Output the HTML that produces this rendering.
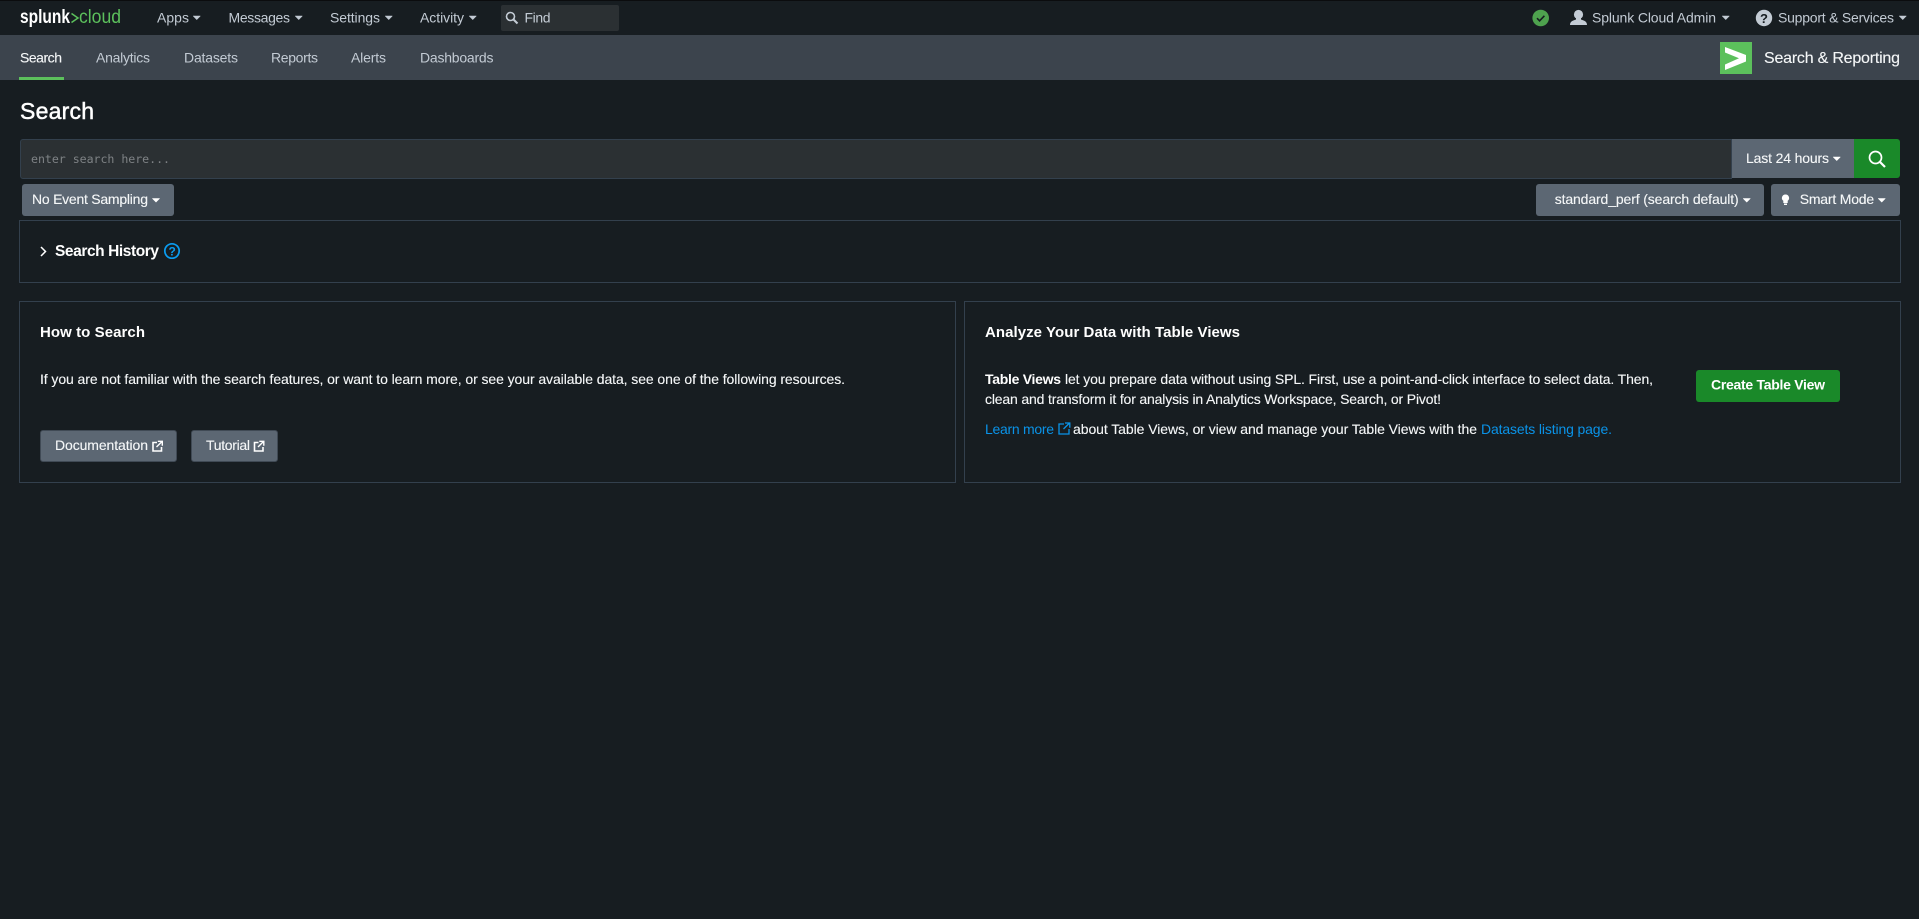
<!DOCTYPE html>
<html lang="en">
<head>
<meta charset="utf-8">
<title>Search | Splunk</title>
<style>
html,body{margin:0;padding:0;width:1919px;height:919px;overflow:hidden;background:#171d21;}
.b{position:absolute;box-sizing:border-box;}
svg{position:absolute;left:0;top:0;}
text{font-family:"Liberation Sans",sans-serif;font-size:14px;fill:#c3cbd4;}
.w{fill:#f5f7f8;stroke:#f5f7f8;stroke-width:.12;}
.h{font-weight:700;fill:#fff;}
.t{fill:#c3cbd4;stroke:#c3cbd4;stroke-width:.6;stroke-linejoin:round;}
.f{fill:#fff;stroke:#fff;stroke-width:.6;stroke-linejoin:round;}
</style>
</head>
<body>
<div class="b" style="left:0;top:0;width:1919px;height:1px;background:#0b0c0e"></div>
<div class="b" style="left:0;top:35px;width:1919px;height:45px;background:#3c444d"></div>
<div class="b" style="left:19px;top:77px;width:45px;height:3px;background:#5cc05c"></div>
<div class="b" style="left:501px;top:5px;width:118px;height:26px;background:#2b3033;border-radius:2px"></div>

<div class="b" style="left:20px;top:139px;width:1712px;height:40px;background:#2b3033;border:1px solid #33404d;border-radius:3px 0 0 3px"></div>
<div class="b" style="left:1732px;top:139px;width:122px;height:39px;background:#5c6773"></div>
<div class="b" style="left:1854px;top:139px;width:46px;height:39px;background:#1a8929;border-radius:0 3px 3px 0"></div>

<div class="b" style="left:22px;top:184px;width:152px;height:32px;background:#5c6773;border-radius:3px"></div>
<div class="b" style="left:1536px;top:184px;width:228px;height:32px;background:#5c6773;border-radius:3px"></div>
<div class="b" style="left:1771px;top:184px;width:129px;height:32px;background:#5c6773;border-radius:3px"></div>

<div class="b" style="left:19px;top:220px;width:1882px;height:63px;border:1px solid #33404d"></div>
<div class="b" style="left:19px;top:301px;width:937px;height:182px;border:1px solid #33404d"></div>
<div class="b" style="left:964px;top:301px;width:937px;height:182px;border:1px solid #33404d"></div>

<div class="b" style="left:40px;top:430px;width:137px;height:32px;background:#5c6773;border:1px solid #404a55;border-radius:3px"></div>
<div class="b" style="left:191px;top:430px;width:87px;height:32px;background:#5c6773;border:1px solid #404a55;border-radius:3px"></div>
<div class="b" style="left:1696px;top:370px;width:144px;height:32px;background:#1a8929;border-radius:3px"></div>

<svg width="1919" height="919" viewBox="0 0 1919 919" xmlns="http://www.w3.org/2000/svg">
  <!-- logo -->
  <text x="20" y="23" class="h" style="font-size:19.5px" textLength="50" lengthAdjust="spacingAndGlyphs">splunk</text>
  <path d="M71.500 13.500l6.500 4.500-6.500 4.500" fill="none" stroke="#5cc05c" stroke-width="1.500"/>
  <text x="79" y="23" style="font-size:19.5px;fill:#5cc05c" textLength="42" lengthAdjust="spacingAndGlyphs">cloud</text>

  <!-- top nav -->
  <text x="157" y="22.500" textLength="32">Apps</text>
  <polygon class="t" points="193.300,16 200.200,16 196.750,19.500"/>
  <text x="228.500" y="22.500" textLength="61.500">Messages</text>
  <polygon class="t" points="295.300,16 302.200,16 298.750,19.500"/>
  <text x="330" y="22.500" textLength="50">Settings</text>
  <polygon class="t" points="385.300,16 392.200,16 388.750,19.500"/>
  <text x="420" y="22.500" textLength="44">Activity</text>
  <polygon class="t" points="469.300,16 476.200,16 472.750,19.500"/>
  <circle cx="510.500" cy="16.500" r="4" fill="none" stroke="#c3cbd4" stroke-width="1.600"/>
  <path d="M513.500 19.500L517.500 23.500" stroke="#c3cbd4" stroke-width="2" fill="none"/>
  <text x="524.500" y="22.500" textLength="26">Find</text>

  <!-- top right -->
  <circle cx="1540.700" cy="18" r="8.300" fill="#4ea24e"/>
  <path d="M1537 18.200l2.600 2.600 4.800-5" fill="none" stroke="#171d21" stroke-width="1.600"/>
  <circle cx="1578.500" cy="14.500" r="4.600" fill="#c3cbd4"/>
  <path d="M1570 25c0-4 3.500-4.500 6-5.500v-2h5v2c2.500 1 6 1.500 6 5.500z" fill="#c3cbd4"/>
  <text x="1592" y="22.500" textLength="124">Splunk Cloud Admin</text>
  <polygon class="t" points="1722.300,16 1729.200,16 1725.750,19.500"/>
  <circle cx="1764" cy="18" r="8.200" fill="#c3cbd4"/>
  <text x="1760" y="23" style="font-size:13px;font-weight:700;fill:#171d21">?</text>
  <text x="1778" y="22.500" textLength="116">Support &amp; Services</text>
  <polygon class="t" points="1899.300,16 1906.200,16 1902.750,19.500"/>

  <!-- sub nav -->
  <text x="20" y="62.500" class="w" textLength="42">Search</text>
  <text x="96" y="62.500" textLength="54">Analytics</text>
  <text x="184" y="62.500" textLength="54">Datasets</text>
  <text x="271" y="62.500" textLength="47">Reports</text>
  <text x="351" y="62.500" textLength="35">Alerts</text>
  <text x="420" y="62.500" textLength="73.500">Dashboards</text>

  <rect x="1720" y="42" width="32" height="32" fill="#5cc05c"/>
  <polygon points="1725,47 1746,55 1746,61.500 1725,70 1725,64.500 1739,58.300 1725,52.500" fill="#fff"/>
  <text x="1764" y="63" class="w" style="font-size:16px" textLength="136">Search &amp; Reporting</text>

  <!-- title -->
  <text x="20" y="119" class="h" style="font-size:23px;font-weight:400;stroke:#fff;stroke-width:.5" textLength="74">Search</text>

  <!-- search bar -->
  <text x="31" y="163" style="font-family:'DejaVu Sans Mono','Liberation Mono',monospace;font-size:11.600px;fill:#7e8285" textLength="139">enter search here...</text>
  <text x="1746" y="163" class="w" textLength="83">Last 24 hours</text>
  <polygon class="f" points="1833.300,157 1840.200,157 1836.750,160.500"/>
  <circle cx="1875.500" cy="157.500" r="6" fill="none" stroke="#fff" stroke-width="1.700"/>
  <path d="M1880 162l5 5" stroke="#fff" stroke-width="2.200" fill="none"/>

  <text x="32" y="204" class="w" textLength="116">No Event Sampling</text>
  <polygon class="f" points="152.500,198.500 159.500,198.500 156,202"/>
  <text x="1554.700" y="204" class="w" textLength="184">standard_perf (search default)</text>
  <polygon class="f" points="1743.300,198.500 1750.200,198.500 1746.750,202"/>
  <path d="M1785.500 194.500a3.500 3.500 0 0 1 2.200 6.300v2.200h-4.400v-2.200a3.500 3.500 0 0 1 2.200-6.300z" fill="#fff"/>
  <rect x="1784" y="203.500" width="3" height="1.500" fill="#fff"/>
  <text x="1799.700" y="204" class="w" textLength="74.500">Smart Mode</text>
  <polygon class="f" points="1878.300,198.500 1885.200,198.500 1881.750,202"/>

  <!-- search history -->
  <path d="M41 247l4.500 4.500-4.500 4.500" fill="none" stroke="#fff" stroke-width="1.500"/>
  <text x="55" y="256" class="h" style="font-size:15.500px" textLength="104">Search History</text>
  <circle cx="172" cy="251" r="7.200" fill="none" stroke="#0a9cf0" stroke-width="1.700"/>
  <text x="168.500" y="255.500" style="font-size:12px;fill:#0a9cf0;font-weight:700">?</text>

  <!-- how to -->
  <text x="40" y="337" class="h" style="font-size:15px" textLength="105">How to Search</text>
  <text x="40" y="384" class="w" textLength="805">If you are not familiar with the search features, or want to learn more, or see your available data, see one of the following resources.</text>
  <text x="55" y="450" class="w" textLength="93">Documentation</text>
  <path d="M157 442.500h-4v8.500h8.500v-4" fill="none" stroke="#fff" stroke-width="1.600"/>
  <path d="M156.500 447l5-5M157.800 441.300h4.500v4.500" fill="none" stroke="#fff" stroke-width="1.400"/>
  <text x="206" y="450" class="w" textLength="44">Tutorial</text>
  <path d="M258.500 442.500h-4v8.500h8.500v-4" fill="none" stroke="#fff" stroke-width="1.600"/>
  <path d="M258 447l5-5M259.300 441.300h4.500v4.500" fill="none" stroke="#fff" stroke-width="1.400"/>

  <!-- table views -->
  <text x="985" y="337" class="h" style="font-size:15px" textLength="255">Analyze Your Data with Table Views</text>
  <text x="985" y="384" class="h" textLength="76">Table Views</text>
  <text x="1065" y="384" class="w" textLength="588">let you prepare data without using SPL. First, use a point-and-click interface to select data. Then,</text>
  <text x="985" y="404" class="w" textLength="456">clean and transform it for analysis in Analytics Workspace, Search, or Pivot!</text>
  <text x="985" y="434" style="fill:#0a93e8" textLength="69">Learn more</text>
  <path d="M1064 424h-5v10h10v-5" fill="none" stroke="#0a93e8" stroke-width="1.300"/>
  <path d="M1063.500 429l5.500-5.500M1065 423h4.800v4.800" fill="none" stroke="#0a93e8" stroke-width="1.300"/>
  <text x="1073" y="434" class="w" textLength="404">about Table Views, or view and manage your Table Views with the</text>
  <text x="1481" y="434" style="fill:#0a93e8" textLength="131">Datasets listing page.</text>
  <text x="1711" y="389.500" class="h" textLength="114">Create Table View</text>
</svg>
</body>
</html>
